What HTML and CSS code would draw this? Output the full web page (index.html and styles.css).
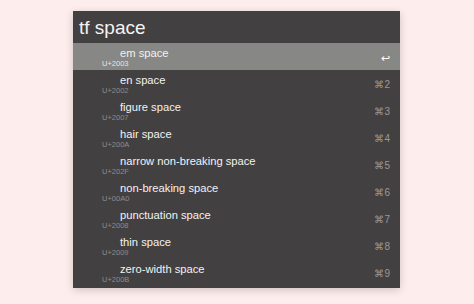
FILE: index.html
```html
<!DOCTYPE html>
<html>
<head>
<meta charset="utf-8">
<link rel="stylesheet" href="styles.css">
</head>
<body>
<div class="panel">
  <div class="query">tf space</div>
  <ul class="list">
    <li class="row selected"><div class="names"><span class="title">em space</span><span class="code">U+2003</span></div><span class="key">↩</span></li>
    <li class="row"><div class="names"><span class="title">en space</span><span class="code">U+2002</span></div><span class="key">⌘2</span></li>
    <li class="row"><div class="names"><span class="title">figure space</span><span class="code">U+2007</span></div><span class="key">⌘3</span></li>
    <li class="row"><div class="names"><span class="title">hair space</span><span class="code">U+200A</span></div><span class="key">⌘4</span></li>
    <li class="row"><div class="names"><span class="title">narrow non-breaking space</span><span class="code">U+202F</span></div><span class="key">⌘5</span></li>
    <li class="row"><div class="names"><span class="title">non-breaking space</span><span class="code">U+00A0</span></div><span class="key">⌘6</span></li>
    <li class="row"><div class="names"><span class="title">punctuation space</span><span class="code">U+2008</span></div><span class="key">⌘7</span></li>
    <li class="row"><div class="names"><span class="title">thin space</span><span class="code">U+2009</span></div><span class="key">⌘8</span></li>
    <li class="row"><div class="names"><span class="title">zero-width space</span><span class="code">U+200B</span></div><span class="key">⌘9</span></li>
  </ul>
</div>
</body>
</html>
```
FILE: styles.css
```css
html, body {
  margin: 0;
  padding: 0;
}
body {
  background: #fdeded;
  width: 474px;
  height: 304px;
  font-family: "Liberation Sans", Arial, sans-serif;
  padding: 11px 0 0 73px;
  box-sizing: border-box;
}
.panel {
  width: 327px;
  background: #434041;
  box-shadow: 0 2px 8px rgba(0,0,0,0.18);
  padding-bottom: 2px;
}
.query {
  height: 32px;
  line-height: 33px;
  padding-left: 6px;
  color: #f4f4f4;
  font-size: 19px;
}
.list {
  list-style: none;
  margin: 0;
  padding: 0;
}
.row {
  height: 27px;
  display: flex;
  align-items: flex-start;
  justify-content: space-between;
  box-sizing: border-box;
}
.row.selected {
  background: #878886;
}
.names {
  display: flex;
  flex-direction: column;
  padding-left: 29px;
}
.title {
  color: #f2f2f2;
  font-size: 11.2px;
  line-height: 14px;
  padding-left: 18px;
  margin-top: 3px;
}
.code {
  color: #8e8c8d;
  font-size: 7.5px;
  line-height: 8px;
  margin-top: 0;
}
.selected .code {
  color: #e4e4e4;
}
.key {
  color: #9a9899;
  font-size: 10px;
  margin-top: 9px;
  padding-right: 10px;
}
.selected .key {
  color: #fff;
  font-size: 11px;
}
```
